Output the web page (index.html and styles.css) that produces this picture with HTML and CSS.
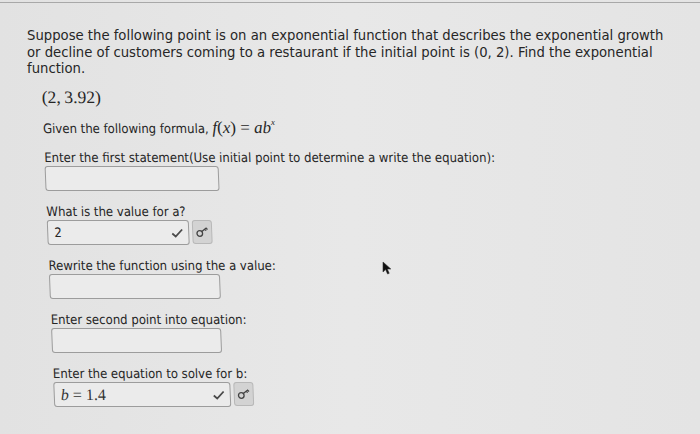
FILE: index.html
```html
<!DOCTYPE html>
<html lang="en">
<head>
<meta charset="utf-8">
<title>Exponential function</title>
<link rel="stylesheet" href="styles.css">
</head>
<body>
<div class="screen">
  <div class="top-rule"></div>
  <main class="problem">
    <p class="intro">Suppose the following point is on an exponential function that describes the exponential growth or decline of customers coming to a restaurant if the initial point is (0, 2). Find the exponential function.</p>
    <section class="answers">
      <div class="point math">(2,&thinsp;3.92)</div>
      <div class="formula">Given the following formula, <span class="math"><i>f</i>(<i>x</i>) = <i>ab</i><sup><i>x</i></sup></span></div>

      <div class="group">
        <div class="label">Enter the first statement(Use initial point to determine a write the equation):</div>
        <div class="field-row"><div class="field w1"></div></div>
      </div>

      <div class="group">
        <div class="label">What is the value for a?</div>
        <div class="field-row">
          <div class="field w2"><span class="val">2</span><svg class="check" viewBox="0 0 12 10" width="12" height="10"><path d="M1 5.5 L4.3 8.5 L11 1.5" fill="none" stroke="#4a4a4a" stroke-width="1.8"/></svg></div>
          <button class="key" type="button"><svg viewBox="0 0 14 12" width="14" height="12"><circle cx="4.5" cy="7.5" r="2.8" fill="none" stroke="#444" stroke-width="1.3"/><path d="M6.6 5.5 L11.5 1.8 M9.6 3.2 L11 4.6 M11 2.2 L12.4 3.4" fill="none" stroke="#444" stroke-width="1.3"/></svg></button>
        </div>
      </div>

      <div class="group">
        <div class="label">Rewrite the function using the a value:</div>
        <div class="field-row"><div class="field w3"></div></div>
      </div>

      <div class="group">
        <div class="label">Enter second point into equation:</div>
        <div class="field-row"><div class="field w4"></div></div>
      </div>

      <div class="group">
        <div class="label">Enter the equation to solve for b:</div>
        <div class="field-row">
          <div class="field w5"><span class="val math"><i>b</i> = 1.4</span><svg class="check" viewBox="0 0 12 10" width="12" height="10"><path d="M1 5.5 L4.3 8.5 L11 1.5" fill="none" stroke="#4a4a4a" stroke-width="1.8"/></svg></div>
          <button class="key" type="button"><svg viewBox="0 0 14 12" width="14" height="12"><circle cx="4.5" cy="7.5" r="2.8" fill="none" stroke="#444" stroke-width="1.3"/><path d="M6.6 5.5 L11.5 1.8 M9.6 3.2 L11 4.6 M11 2.2 L12.4 3.4" fill="none" stroke="#444" stroke-width="1.3"/></svg></button>
        </div>
      </div>
    </section>
  </main>
  <svg class="cursor" viewBox="0 0 10 14" width="10" height="14"><path d="M1 1 L1 11 L3.6 8.6 L5.6 13 L7.2 12.3 L5.3 8 L8.8 8 Z" fill="#111" stroke="#333" stroke-width="0.6"/></svg>
</div>
</body>
</html>
```

FILE: styles.css
```css
* { box-sizing: border-box; }
html, body { margin: 0; padding: 0; }
body {
  background: #e5e5e5;
  color: #262626;
  font-family: "DejaVu Sans", "Liberation Sans", sans-serif;
  font-stretch: condensed;
}
.screen {
  position: relative;
  width: 700px;
  height: 434px;
  overflow: hidden;
  background: linear-gradient(90deg, #e2e2e2 0%, #e8e8e8 50%, #e4e4e4 100%);
}
.top-rule {
  height: 3px;
  border-bottom: 1px solid #a8a8a8;
}
.problem {
  padding: 24px 0 0 27px;
}
.intro {
  margin: 0;
  width: 648px;
  font-size: 14.7px;
  line-height: 16.5px;
}
.answers {
  padding: 10px 0 0 14px;
  transform-origin: 0 0;
  transform: skewX(2.3deg);
  font-size: 13px;
}
.math {
  font-family: "Liberation Serif", "DejaVu Serif", serif;
  font-stretch: normal;
}
.point {
  font-size: 17.5px;
  line-height: 20px;
}
.formula {
  margin-top: 12px;
  height: 18px;
  line-height: 18px;
  font-size: 13px;
}
.formula .math { font-size: 17px; }
.formula sup { font-size: 9px; line-height: 0; vertical-align: 8px; }
.group {
  margin-top: 12px;
}
.group:first-of-type { margin-top: 12px; }
.label {
  line-height: 17px;
  font-size: 13px;
}
.field-row {
  display: flex;
  gap: 3px;
}
.field {
  height: 25px;
  border: 1px solid #9c9c9c;
  border-radius: 3px;
  background: #ebebeb;
  display: flex;
  align-items: center;
  justify-content: space-between;
  padding: 0 5px 0 6px;
}
.w1 { width: 174px; }
.w2 { width: 142px; }
.w3 { width: 171px; }
.w4 { width: 170px; }
.w5 { width: 177px; }
.val { font-size: 13px; }
.val.math { font-size: 16px; color: #333; }
.check { margin-left: auto; }
.key {
  width: 20px;
  height: 24px;
  padding: 0;
  border: 1px solid #b8b8b8;
  border-radius: 3px;
  background: #d3d3d3;
  display: flex;
  align-items: center;
  justify-content: center;
}
.cursor {
  position: absolute;
  left: 382px;
  top: 261px;
}
```
